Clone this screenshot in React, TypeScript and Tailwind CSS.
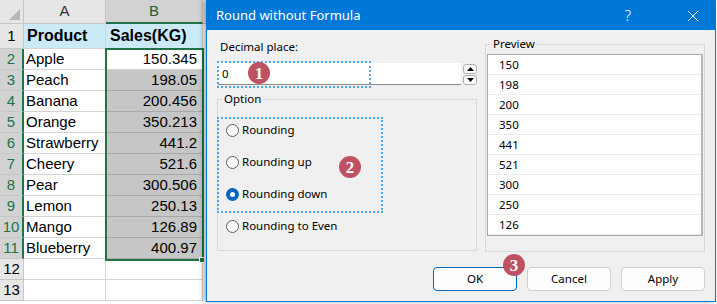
import React from "react";

const data: [string, string][] = [
  ["Apple", "150.345"],
  ["Peach", "198.05"],
  ["Banana", "200.456"],
  ["Orange", "350.213"],
  ["Strawberry", "441.2"],
  ["Cheery", "521.6"],
  ["Pear", "300.506"],
  ["Lemon", "250.13"],
  ["Mango", "126.89"],
  ["Blueberry", "400.97"],
];

const preview = ["150", "198", "200", "350", "441", "521", "300", "250", "126"];

function Badge({ n }: { n: string }) {
  return (
    <div className="w-[22px] h-[22px] rounded-full bg-[#be5263] flex items-center justify-center text-white font-bold text-[17px] leading-none [font-family:'Liberation_Serif',serif]">
      {n}
    </div>
  );
}

function Radio({ checked, label }: { checked?: boolean; label: string }) {
  return (
    <div className="flex items-center h-[16px]">
      {checked ? (
        <div className="w-[13px] h-[13px] rounded-full bg-[#0067c0] flex items-center justify-center">
          <div className="w-[5px] h-[5px] rounded-full bg-white" />
        </div>
      ) : (
        <div className="w-[13px] h-[13px] rounded-full border border-[#5a5a5a] bg-[#fbfbfb]" />
      )}
      <span className="ml-[3px]">{label}</span>
    </div>
  );
}

function Sheet() {
  return (
    <div className="relative w-[206px] h-[304px] bg-white [font-family:'Liberation_Sans',Arial,sans-serif] text-[15px] text-black">
      {/* header row */}
      <div className="flex h-[24px]">
        <div className="relative w-[24px] bg-[#e6e6e6] border-r border-b border-[#c6c6c6]">
          <svg className="absolute right-[3px] bottom-[3px]" width="11" height="11" viewBox="0 0 11 11">
            <polygon points="11,0 11,11 0,11" fill="#b8b8b8" />
          </svg>
        </div>
        <div className="w-[82px] bg-[#e6e6e6] border-r border-b border-[#c6c6c6] flex items-center justify-center text-[#333]">A</div>
        <div className="w-[97px] bg-[#d2d2d2] border-r border-[#c6c6c6] border-b-2 border-b-[#217346] flex items-center justify-center text-[#1e5e3a]">B</div>
        <div className="flex-1 bg-[#e6e6e6] border-b border-[#c6c6c6]" />
      </div>
      {/* row 1 */}
      <div className="flex h-[25px]">
        <div className="w-[24px] bg-[#e6e6e6] border-r border-b border-[#c6c6c6] flex items-center justify-center">1</div>
        <div className="w-[82px] bg-[#cbeaf8] border-r border-b border-[#d4d4d4] flex items-center pl-[3px] font-bold text-[16px]">Product</div>
        <div className="w-[97px] bg-[#cbeaf8] border-r border-b border-[#d4d4d4] flex items-center pl-[4px] font-bold text-[16px]">Sales(KG)</div>
        <div className="flex-1" />
      </div>
      {data.map(([name, val], i) => (
        <div key={name} className="flex h-[21px]">
          <div className="w-[24px] bg-[#d2d2d2] border-r-2 border-r-[#217346] border-b border-b-[#c6c6c6] flex items-center justify-center text-[#217346]">
            {i + 2}
          </div>
          <div className="w-[82px] border-r border-b border-[#d4d4d4] flex items-center pl-[2px]">{name}</div>
          <div
            className={
              "w-[97px] border-r border-b flex items-center justify-end pr-[5px] " +
              (i === 0 ? "bg-white border-[#d4d4d4]" : "bg-[#c6c6c6] border-[#a9a9a9]")
            }
          >
            {val}
          </div>
          <div className="flex-1" />
        </div>
      ))}
      {[12, 13].map((n) => (
        <div key={n} className="flex h-[21px]">
          <div className="w-[24px] bg-[#e6e6e6] border-r border-b border-[#c6c6c6] flex items-center justify-center">{n}</div>
          <div className="w-[82px] border-r border-b border-[#d4d4d4]" />
          <div className="w-[97px] border-r border-b border-[#d4d4d4]" />
          <div className="flex-1" />
        </div>
      ))}
      {/* selection overlay */}
      <div className="absolute left-[105px] top-[48px] w-[99px] h-[213px] border-2 border-[#217346]" />
      <div className="absolute left-[199px] top-[257px] w-[6px] h-[6px] bg-[#217346] border border-white" />
    </div>
  );
}

function Dialog() {
  return (
    <div className="relative w-[510px] h-[302px] border border-[#0078d7] bg-[#f0f0f0] flex flex-col shadow-[-3px_0_5px_rgba(0,0,0,0.3)] [font-family:'Noto_Sans',sans-serif] text-[11.5px] text-black">
      <div className="h-[29px] bg-[#0078d7] flex items-center pl-[9px] text-white text-[13px]">
        <span>Round without Formula</span>
        <span className="ml-auto mr-[56px] text-[15px] font-light">?</span>
        <svg className="mr-[16px]" width="12" height="12" viewBox="0 0 12 12">
          <path d="M1 1 L11 11 M11 1 L1 11" stroke="white" strokeWidth="1" />
        </svg>
      </div>
      <div className="flex-1 flex flex-col px-[10px]">
        <div className="flex gap-[8px]">
          {/* left column */}
          <div className="w-[260px] flex flex-col">
            <div className="mt-[9px] h-[16px] leading-[16px] pl-[3px]">Decimal place:</div>
            <div className="mt-[8px] flex items-center">
              <div className="w-[244px] h-[22px] bg-white border-b border-[#8a8a8a] flex items-center pl-[4px] ml-[1px]">0</div>
              <div className="ml-[2px] flex flex-col gap-[1px]">
                <div className="w-[14px] h-[10px] rounded-[3px] border border-[#b0b0b0] bg-[#fdfdfd] flex items-center justify-center">
                  <svg width="7" height="4" viewBox="0 0 7 4"><polygon points="3.5,0 7,4 0,4" fill="#000" /></svg>
                </div>
                <div className="w-[14px] h-[10px] rounded-[3px] border border-[#b0b0b0] bg-[#fdfdfd] flex items-center justify-center">
                  <svg width="7" height="4" viewBox="0 0 7 4"><polygon points="0,0 7,0 3.5,4" fill="#000" /></svg>
                </div>
              </div>
            </div>
            <fieldset className="mt-[6px] h-[160px] border border-[#d9d9d9] p-0">
              <legend className="ml-[4px] px-[2px] leading-[16px]">Option</legend>
              <div className="pl-[8px] pt-[15px] flex flex-col gap-[16px]">
                <Radio label="Rounding" />
                <Radio label="Rounding up" />
                <Radio checked label="Rounding down" />
                <Radio label="Rounding to Even" />
              </div>
            </fieldset>
          </div>
          {/* right column */}
          <div className="w-[220px] flex flex-col">
            <fieldset className="mt-[6px] h-[216px] border border-[#d9d9d9] px-[1px] pt-[2px] flex flex-col">
              <legend className="ml-[4px] px-[2px] leading-[16px]">Preview</legend>
              <div className="flex-1 bg-white border border-[#a8a8a8] border-r-2 border-r-[#b4b4b4]">
                {preview.map((p) => (
                  <div key={p} className="h-[20px] flex items-center pl-[11px] border-b border-dotted border-[#dcdcdc]">
                    {p}
                  </div>
                ))}
              </div>
            </fieldset>
          </div>
        </div>
        <div className="mt-[15px] flex justify-end gap-[10px]">
          <div className="w-[84px] h-[24px] rounded-[4px] bg-[#fdfdfd] border border-[#0067c0] flex items-center justify-center">OK</div>
          <div className="w-[84px] h-[24px] rounded-[4px] bg-[#fdfdfd] border border-[#d0d0d0] flex items-center justify-center">Cancel</div>
          <div className="w-[84px] h-[24px] rounded-[4px] bg-[#fdfdfd] border border-[#d0d0d0] flex items-center justify-center">Apply</div>
        </div>
      </div>
      {/* annotations */}
      <div className="absolute left-[10px] top-[60px] w-[154px] h-[27px] border-2 border-dotted border-[#4da6e6]" />
      <div className="absolute left-[10px] top-[116px] w-[166px] h-[96px] border-2 border-dotted border-[#4da6e6]" />
      <div className="absolute left-[41px] top-[61px]"><Badge n="1" /></div>
      <div className="absolute left-[132px] top-[155px]"><Badge n="2" /></div>
      <div className="absolute left-[296px] top-[253px]"><Badge n="3" /></div>
    </div>
  );
}

export default function App() {
  return (
    <div className="w-[717px] h-[304px] overflow-hidden bg-white flex">
      <Sheet />
      <Dialog />
    </div>
  );
}
